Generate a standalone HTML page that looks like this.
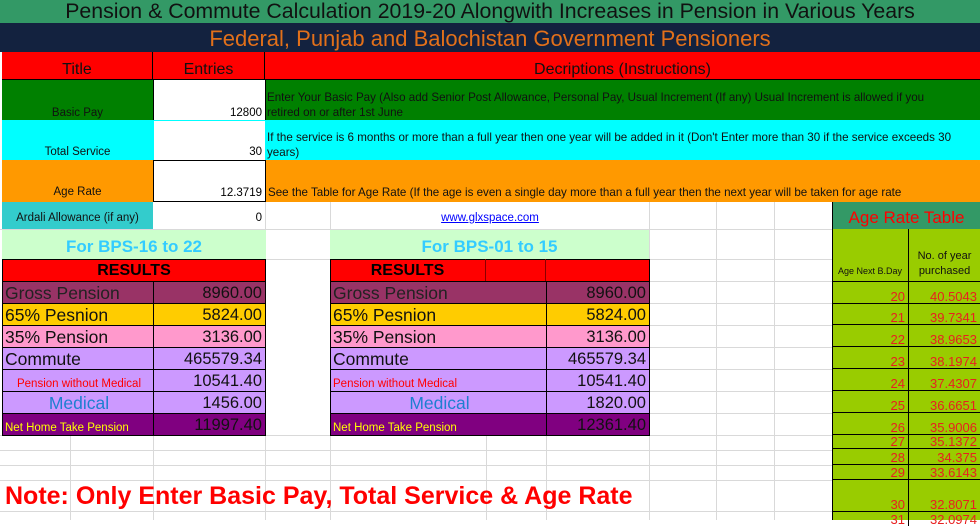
<!DOCTYPE html>
<html><head><meta charset="utf-8"><style>
*{margin:0;padding:0;box-sizing:border-box}
body{width:980px;height:520px;overflow:hidden;background:#fff;font-family:"Liberation Sans",Arial,sans-serif;position:relative}
.c{position:absolute;overflow:hidden;white-space:nowrap}
.gv{position:absolute;width:1px;background:#d9d9d9}
.gh{position:absolute;height:1px;background:#d9d9d9}
.b{border:1px solid #000}
.r{text-align:right;padding-right:3px}
</style></head><body>
<div class="gv" style="left:70px;top:435px;height:85px"></div>
<div class="gv" style="left:153px;top:435px;height:85px"></div>
<div class="gv" style="left:265px;top:202px;height:318px"></div>
<div class="gv" style="left:330px;top:202px;height:318px"></div>
<div class="gv" style="left:486px;top:435px;height:85px"></div>
<div class="gv" style="left:546px;top:435px;height:85px"></div>
<div class="gv" style="left:649px;top:202px;height:318px"></div>
<div class="gv" style="left:716px;top:202px;height:318px"></div>
<div class="gv" style="left:774px;top:202px;height:318px"></div>
<div class="gh" style="left:0;top:229px;width:832px"></div>
<div class="gh" style="left:265px;top:259px;width:567px"></div>
<div class="gh" style="left:649px;top:281px;width:183px"></div>
<div class="gh" style="left:649px;top:303px;width:183px"></div>
<div class="gh" style="left:649px;top:325px;width:183px"></div>
<div class="gh" style="left:649px;top:347px;width:183px"></div>
<div class="gh" style="left:649px;top:369px;width:183px"></div>
<div class="gh" style="left:649px;top:391px;width:183px"></div>
<div class="gh" style="left:649px;top:413px;width:183px"></div>
<div class="gh" style="left:0;top:435px;width:832px"></div>
<div class="gh" style="left:0;top:450px;width:832px"></div>
<div class="gh" style="left:0;top:465px;width:832px"></div>
<div class="gh" style="left:0;top:480px;width:832px"></div>
<div class="gh" style="left:0;top:511px;width:832px"></div>

<div class="c" style="left:0;top:0;width:980px;height:23px;background:#339966;color:#111;font-size:21.3px;text-align:center;line-height:23px">Pension &amp; Commute Calculation 2019-20 Alongwith Increases in Pension in Various Years</div>
<div class="c" style="left:0;top:23px;width:980px;height:29px;background:#13223f;color:#e2701a;font-size:22px;text-align:center;line-height:31px">Federal, Punjab and Balochistan Government Pensioners</div>
<div class="c" style="left:2px;top:52px;width:978px;height:27px;background:#f00"></div>
<div class="c" style="left:2px;top:52px;width:151px;height:27px;color:#111;font-size:16px;text-align:center;line-height:36px;border-right:1px solid #000">Title</div>
<div class="c" style="left:153px;top:52px;width:112px;height:27px;color:#111;font-size:16px;text-align:center;line-height:36px;border-right:1px solid #000">Entries</div>
<div class="c" style="left:265px;top:52px;width:715px;height:27px;color:#111;font-size:16px;text-align:center;line-height:36px">Decriptions (Instructions)</div>

<div class="c" style="left:2px;top:79px;width:978px;height:41px;background:#008000;border-top:1px solid #000"></div>
<div class="c" style="left:2px;top:79px;width:151px;height:41px;font-size:11.5px;text-align:center;line-height:12px;padding-top:28px;color:#111">Basic Pay</div>
<div class="c b r" style="left:153px;top:79px;width:113px;height:42px;background:#fff;font-size:11.5px;padding-top:27px">12800</div>
<div class="c" style="left:267px;top:90px;width:685px;font-size:11.6px;line-height:15px;white-space:normal;color:#111">Enter Your Basic Pay (Also add Senior Post Allowance, Personal Pay, Usual Increment (If any) Usual Increment is allowed if you retired on or after 1st June</div>

<div class="c" style="left:2px;top:120px;width:978px;height:40px;background:#0ff"></div>
<div class="c" style="left:2px;top:120px;width:151px;height:40px;font-size:11.5px;text-align:center;padding-top:26px;color:#111">Total Service</div>
<div class="c r" style="left:154px;top:121px;width:111px;height:39px;background:#fff;font-size:11.5px;padding-top:25px">30</div>
<div class="c" style="left:267px;top:130px;width:713px;font-size:11.6px;line-height:15px;white-space:normal;color:#111">If the service is 6 months or more than a full year then one year will be added in it (Don't Enter more than 30 if the service exceeds 30 years)</div>

<div class="c" style="left:2px;top:160px;width:978px;height:42px;background:#f90"></div>
<div class="c" style="left:2px;top:160px;width:151px;height:42px;font-size:11.5px;text-align:center;padding-top:26px;color:#111">Age Rate</div>
<div class="c b r" style="left:153px;top:160px;width:113px;height:42px;background:#fff;font-size:11.5px;padding-top:26px">12.3719</div>
<div class="c" style="left:268px;top:186px;width:712px;font-size:11.6px;color:#111">See the Table for Age Rate (If the age is even a single day more than a full year then the next year will be taken for age rate</div>

<div class="c" style="left:2px;top:202px;width:151px;height:27px;background:#33cccc;font-size:11.5px;text-align:center;padding-top:10px;color:#111">Ardali Allowance (if any)</div>
<div class="c r" style="left:153px;top:202px;width:112px;height:27px;font-size:11.5px;padding-top:10px">0</div>
<div class="c" style="left:330px;top:202px;width:320px;height:27px;font-size:11.5px;text-align:center;padding-top:10px;color:#00f;text-decoration:underline">www.glxspace.com</div>

<div class="c" style="left:2px;top:230px;width:264px;height:29px;background:#ccffcc;color:#33ccff;font-size:17px;font-weight:bold;text-align:center;line-height:33px">For BPS-16 to 22</div>
<div class="c" style="left:330px;top:230px;width:319px;height:29px;background:#ccffcc;color:#33ccff;font-size:17px;font-weight:bold;text-align:center;line-height:33px">For BPS-01 to 15</div>

<div class="c b" style="left:2px;top:259px;width:264px;height:23px;background:#f00;font-size:16px;font-weight:bold;text-align:center;line-height:22px">RESULTS</div>
<div class="c b" style="left:330px;top:259px;width:320px;height:23px;background:#f00"></div>
<div class="c" style="left:330px;top:259px;width:156px;height:23px;font-size:16px;font-weight:bold;text-align:center;line-height:23px;border-right:1px solid #800">RESULTS</div>
<div class="c" style="left:486px;top:259px;width:60px;height:23px;border-right:1px solid #800"></div>

<div id="rows"></div>
<script>
var rows=[["Gross Pension","8960.00","8960.00","#993366","#222",17.5],
["65% Pesnion","5824.00","5824.00","#ffcc00","#111",17.5],
["35% Pension","3136.00","3136.00","#ff99cc","#111",17.5],
["Commute","465579.34","465579.34","#cc99ff","#111",17.5],
["Pension without Medical","10541.40","10541.40","#cc99ff","#f00",11.5],
["Medical","1456.00","1820.00","#cc99ff","#1e7fd0",17.5],
["Net Home Take Pension","11997.40","12361.40","#800080","#ff0",11.5]];
var h="";
rows.forEach(function(r,i){var t=281+i*22;
function blk(x,lw,vw,val){
h+='<div class="c b" style="left:'+x+'px;top:'+t+'px;width:'+lw+'px;height:23px;background:'+r[3]+';color:'+r[4]+';font-size:'+r[5]+'px;text-align:'+((i==5)?'center':(i==4&&x<10?'center':'left'))+';padding-left:2px;line-height:'+(r[5]>12?23:28)+'px">'+r[0]+'</div>';
h+='<div class="c b r" style="left:'+(x+lw-1)+'px;top:'+t+'px;width:'+vw+'px;height:23px;background:'+r[3]+';color:#111;font-size:16.5px;line-height:23px">'+val+'</div>';}
blk(2,152,113,r[1]);blk(330,217,104,r[2]);
});
document.getElementById("rows").innerHTML=h;
</script>

<div class="c" style="left:5px;top:481px;width:700px;font-size:25px;font-weight:bold;color:#f00;line-height:30px">Note: Only Enter Basic Pay, Total Service &amp; Age Rate</div>

<div class="c" style="left:832px;top:202px;width:148px;height:27px;background:#339966;color:#f00;font-size:17px;text-align:center;line-height:31px;border-left:1px solid #000">Age Rate Table</div>
<div class="c" style="left:832px;top:229px;width:148px;height:291px;background:#99cc00;border-left:1px solid #000"></div>
<div class="c" style="left:832px;top:229px;width:77px;height:52px;font-size:9px;text-align:center;padding-top:37px;border-right:1px solid #000;color:#111">Age Next B.Day</div>
<div class="c" style="left:909px;top:229px;width:71px;height:52px;font-size:11px;text-align:center;padding-top:20px;line-height:15px;white-space:normal;color:#111">No. of year purchased</div>
<div id="ar"></div>
<script>
var d=[[20,"40.5043",281,22],[21,"39.7341",303,21],[22,"38.9653",324,22],[23,"38.1974",346,22],[24,"37.4307",368,22],[25,"36.6651",390,22],[26,"35.9006",412,22],[27,"35.1372",434,14],[28,"34.375",448,16],[29,"33.6143",464,15],[30,"32.8071",479,32],[31,"32.0974",511,15]];
var s="";d.forEach(function(e){
s+='<div class="c r" style="left:832px;top:'+e[2]+'px;width:77px;height:'+e[3]+'px;border-top:1px solid #000;border-right:1px solid #000;color:#e82020;font-size:13px;line-height:'+(e[3]*2-15)+'px">'+e[0]+'</div>';
s+='<div class="c r" style="left:909px;top:'+e[2]+'px;width:71px;height:'+e[3]+'px;border-top:1px solid #000;color:#e82020;font-size:13px;line-height:'+(e[3]*2-15)+'px">'+e[1]+'</div>';});
document.getElementById("ar").innerHTML=s;
</script>
</body></html>
